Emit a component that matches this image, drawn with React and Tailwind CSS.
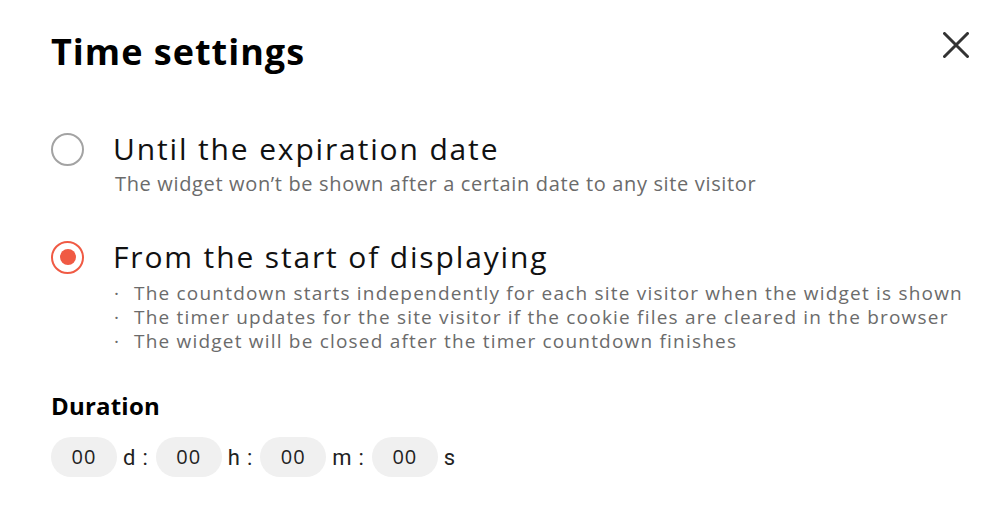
import React from "react";

const F = { fontFamily: '"Open Sans", "Liberation Sans", sans-serif' };

function Pill() {
  return (
    <div className="w-[66px] h-[40px] rounded-full bg-[#f0f0f0] flex items-center justify-center text-[20px] tracking-[1px] text-[#222]" style={F}>
      00
    </div>
  );
}

function Bullet({ children }) {
  return (
    <li className="flex">
      <span className="w-[20px] shrink-0">·</span>
      <span>{children}</span>
    </li>
  );
}

function Unit({ children, colon = true }) {
  return (
    <>
      <span className="ml-[6px]">{children}</span>
      {colon && <span className="ml-[7px] mr-[8px]">:</span>}
    </>
  );
}

export default function App() {
  return (
    <div className="w-[1000px] h-[525px] bg-white relative" style={F}>
      <div className="pl-[51px] pr-[31px] pt-[28px]">
        <div className="flex items-start justify-between">
          <h1 className="text-[36px] leading-[48px] font-bold text-black tracking-[1px]">Time settings</h1>
          <button className="mt-[4px] w-[26px] h-[26px] flex items-center justify-center">
            <svg width="26" height="26" viewBox="0 0 26 26" fill="none" stroke="#333" strokeWidth="3" strokeLinecap="round">
              <path d="M1.5 1.5 L24.5 24.5 M24.5 1.5 L1.5 24.5" />
            </svg>
          </button>
        </div>

        <div className="mt-[53px] flex items-center gap-[29px]">
          <div className="w-[33px] h-[33px] rounded-full border-[2.5px] border-[#a3a3a3]" />
          <div className="text-[30px] leading-[40px] text-[#111] tracking-[1.85px]">Until the expiration date</div>
        </div>
        <div className="mt-[3px] pl-[64px] text-[20px] leading-[24px] text-[#6b6b6b] tracking-[0.65px]">
          The widget won’t be shown after a certain date to any site visitor
        </div>

        <div className="mt-[41px] flex items-center gap-[29px]">
          <div className="w-[33px] h-[33px] rounded-full border-[2.5px] border-[#f05a44] flex items-center justify-center">
            <div className="w-[16px] h-[16px] rounded-full bg-[#f05a44]" />
          </div>
          <div className="text-[30px] leading-[40px] text-[#111] tracking-[1.85px]">From the start of displaying</div>
        </div>
        <ul className="mt-[4px] pl-[63px] text-[19px] leading-[24px] text-[#6b6b6b] tracking-[1.2px]">
          <Bullet>The countdown starts independently for each site visitor when the widget is shown</Bullet>
          <Bullet>The timer updates for the site visitor if the cookie files are cleared in the browser</Bullet>
          <Bullet>The widget will be closed after the timer countdown finishes</Bullet>
        </ul>

        <div className="mt-[38px] text-[24px] leading-[30px] font-bold text-black tracking-[0.2px]">Duration</div>
        <div className="mt-[16px] flex items-center text-[22px] text-[#222]" style={{ fontFamily: 'Roboto, sans-serif' }}>
          <Pill />
          <Unit>d</Unit>
          <Pill />
          <Unit>h</Unit>
          <Pill />
          <Unit>m</Unit>
          <Pill />
          <Unit colon={false}>s</Unit>
        </div>
      </div>
    </div>
  );
}
